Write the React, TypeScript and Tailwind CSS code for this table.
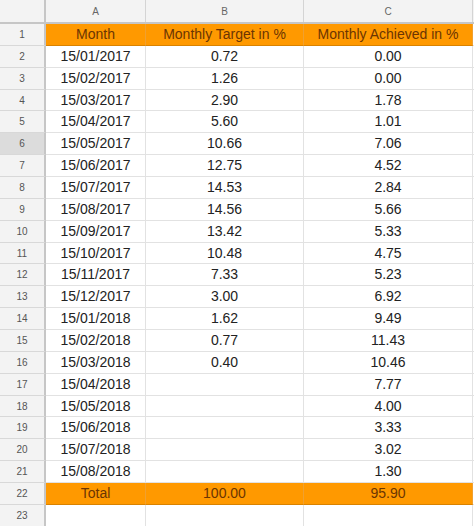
import React from "react";

const rows: [string, string, string][] = [
  ["15/01/2017", "0.72", "0.00"],
  ["15/02/2017", "1.26", "0.00"],
  ["15/03/2017", "2.90", "1.78"],
  ["15/04/2017", "5.60", "1.01"],
  ["15/05/2017", "10.66", "7.06"],
  ["15/06/2017", "12.75", "4.52"],
  ["15/07/2017", "14.53", "2.84"],
  ["15/08/2017", "14.56", "5.66"],
  ["15/09/2017", "13.42", "5.33"],
  ["15/10/2017", "10.48", "4.75"],
  ["15/11/2017", "7.33", "5.23"],
  ["15/12/2017", "3.00", "6.92"],
  ["15/01/2018", "1.62", "9.49"],
  ["15/02/2018", "0.77", "11.43"],
  ["15/03/2018", "0.40", "10.46"],
  ["15/04/2018", "", "7.77"],
  ["15/05/2018", "", "4.00"],
  ["15/06/2018", "", "3.33"],
  ["15/07/2018", "", "3.02"],
  ["15/08/2018", "", "1.30"],
];

type Row = { n: number; cells: [string, string, string]; orange?: boolean };

const all: Row[] = [
  { n: 1, cells: ["Month", "Monthly Target in %", "Monthly Achieved in %"], orange: true },
  ...rows.map((c, i) => ({ n: i + 2, cells: c })),
  { n: 22, cells: ["Total", "100.00", "95.90"], orange: true },
  { n: 23, cells: ["", "", ""] },
];

export default function App() {
  return (
    <div
      className="w-[474px] h-[526px] overflow-hidden bg-white flex flex-col"
      style={{ fontFamily: '"Liberation Sans", Arial, sans-serif' }}
    >
      <div className="flex h-[24px] flex-none bg-[#f3f3f3] border-b-2 border-[#c6c6c6]">
        <div className="w-[46px] flex-none border-r-2 border-[#c6c6c6]" />
        <div className="w-[100px] flex-none border-r border-[#d4d4d4] flex items-center justify-center text-[10px] text-[#666]">A</div>
        <div className="w-[158px] flex-none border-r border-[#d4d4d4] flex items-center justify-center text-[10px] text-[#666]">B</div>
        <div className="w-[169px] flex-none border-r border-[#d4d4d4] flex items-center justify-center text-[10px] text-[#666]">C</div>
        <div className="flex-1" />
      </div>
      {all.map((r) => (
        <div key={r.n} className="flex h-[21.86px] flex-none">
          <div
            className={`w-[46px] flex-none border-r-2 border-b border-r-[#c6c6c6] border-b-[#d8d8d8] flex items-center justify-center text-[10px] text-[#555] ${
              r.n === 6 ? "bg-[#dcdcdc]" : "bg-[#f3f3f3]"
            }`}
          >
            {r.n}
          </div>
          {r.cells.map((c, i) => (
            <div
              key={i}
              className={`flex-none flex items-center justify-center text-[14px] border-r border-b ${
                i === 0 ? "w-[100px]" : i === 1 ? "w-[158px]" : "w-[169px]"
              } ${
                r.orange
                  ? "bg-[#ff9900] text-[#6b3503] border-r-[#f0a030] border-b-[#d98200]"
                  : "bg-white text-[#222] border-[#e2e2e2]"
              }`}
            >
              {c}
            </div>
          ))}
          <div className="flex-1 border-b border-[#e2e2e2]" />
        </div>
      ))}
      <div className="flex-1 bg-white" />
    </div>
  );
}
